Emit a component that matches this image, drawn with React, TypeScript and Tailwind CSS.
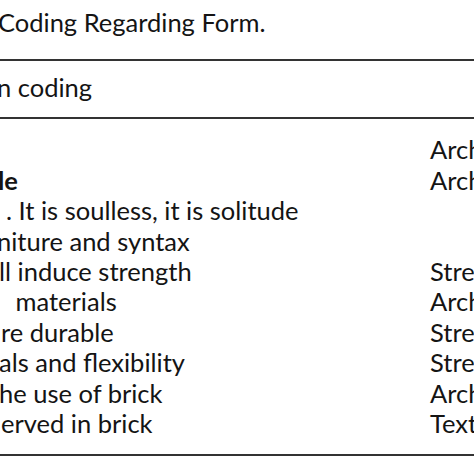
const ROWS: { left: string; right: string; bold?: boolean; shift?: string }[] = [
  { left: '', right: 'Architecture' },
  { left: 'le', right: 'Architecture', bold: true, shift: '-ml-[2px]' },
  { left: '. It is soulless, it is solitude', right: '', shift: 'ml-[6px]' },
  { left: 'niture and syntax', right: '', shift: '-ml-[3px]' },
  { left: 'll induce strength', right: 'Strength', shift: '-ml-[1px]' },
  { left: '\u00a0materials', right: 'Architecture', shift: 'ml-[9px]' },
  { left: 're durable', right: 'Strength', shift: 'ml-[1px]' },
  { left: 'als and flexibility', right: 'Strength', shift: '-ml-[1px]' },
  { left: 'he use of brick', right: 'Architecture', shift: '-ml-[1px]' },
  { left: 'erved in brick', right: 'Texture', shift: 'ml-[1px]' },
]

export default function App() {
  return (
    <div className="w-[474px] h-[474px] overflow-hidden bg-white text-[#141414] text-[25.5px] leading-none whitespace-nowrap font-['Lato','Liberation_Sans',sans-serif]">
      {/* caption */}
      <div className="h-[59px] flex items-center pb-[14px]">
        <span className="-ml-[2px]">Coding Regarding Form.</span>
      </div>
      <div className="border-t-2 border-[#333]" />

      {/* header */}
      <div className="h-[56px] flex items-center pb-[2px]">
        <span className="-ml-[3px]">n coding</span>
      </div>
      <div className="border-t-2 border-[#333]" />

      {/* body */}
      <div className="pt-[16px] pb-[15px]">
        {ROWS.map((r, i) => (
          <div key={i} className="h-[30.4px] flex items-center">
            <div className="w-[430px] shrink-0 overflow-hidden">
              <span className={`inline-block ${r.shift ?? ''} ${r.bold ? 'font-bold' : ''}`}>{r.left}</span>
            </div>
            <div className="shrink-0">{r.right}</div>
          </div>
        ))}
      </div>
      <div className="border-t-2 border-[#333]" />
    </div>
  )
}
